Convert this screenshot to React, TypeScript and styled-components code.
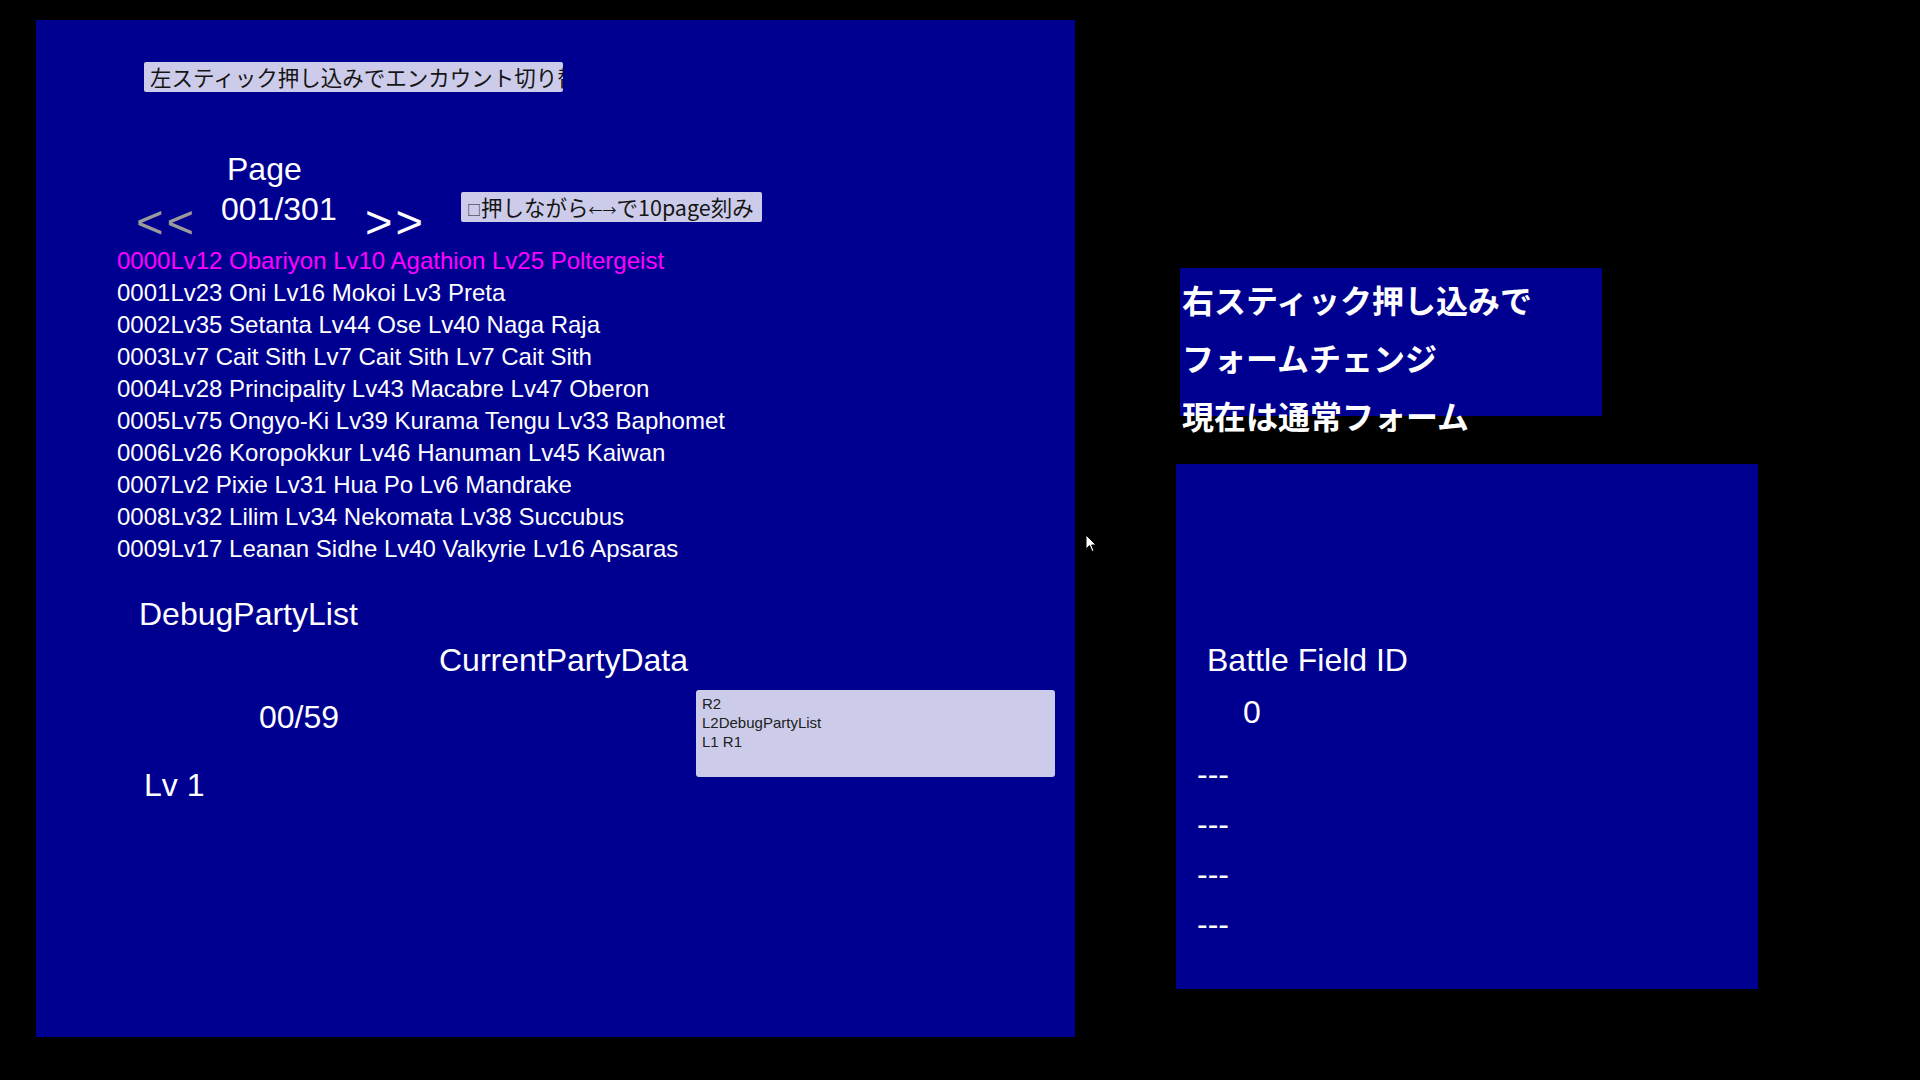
import React from 'react';
import styled, { createGlobalStyle } from 'styled-components';

const GlobalStyle = createGlobalStyle`
  html, body {
    margin: 0;
    padding: 0;
    background: #000;
  }
  body {
    font-family: 'Liberation Sans', Arial, sans-serif;
  }
`;

const PANEL_BLUE = '#000090';
const LABEL_BG = '#ccccea';

const Screen = styled.div`
  position: relative;
  width: 1920px;
  height: 1080px;
  box-sizing: border-box;
  padding: 20px 0 0 36px;
  display: flex;
  align-items: flex-start;
  background: #000;
  overflow: hidden;
`;

const LeftPanel = styled.section`
  width: 1039px;
  height: 1017px;
  background: ${PANEL_BLUE};
  display: flex;
  flex-direction: column;
  align-items: flex-start;
  color: #fff;
`;

const JpLabel = styled.div<{ $w: number; $x: number; $y: number }>`
  width: ${({ $w }) => $w}px;
  height: 30px;
  margin: ${({ $y }) => $y}px 0 0 ${({ $x }) => $x}px;
  box-sizing: border-box;
  padding: 0 6px;
  background: ${LABEL_BG};
  border-radius: 2px;
  color: #151515;
  font-family: 'Noto Sans CJK JP', sans-serif;
  font-size: 21.5px;
  line-height: 30px;
  white-space: nowrap;
  overflow: hidden;
`;

const Symbol = styled.span`
  font-size: 14px;
  vertical-align: 1px;
`;

const NavRow = styled.div`
  margin-top: 57px;
  height: 96px;
  padding-left: 100px;
  display: grid;
  grid-template-columns: 85px 144px 96px auto;
  align-items: start;
`;

const Arrow = styled.div<{ $dim?: boolean }>`
  margin-top: 49px;
  font-size: 47px;
  line-height: 47px;
  letter-spacing: 3px;
  color: ${({ $dim }) => ($dim ? '#9a9a9a' : '#fff')};
`;

const PageBlock = styled.div`
  display: flex;
  flex-direction: column;
`;

const BigText = styled.div<{ $x?: number; $y?: number }>`
  margin: ${({ $y = 0 }) => $y}px 0 0 ${({ $x = 0 }) => $x}px;
  font-size: 32px;
  line-height: 40px;
  color: #fff;
  white-space: nowrap;
`;

const HintSlot = styled.div`
  margin-top: 43px;
`;

const DemonList = styled.ul`
  margin: 0 0 0 81px;
  padding: 0;
  list-style: none;
`;

const DemonRow = styled.li<{ $active?: boolean }>`
  font-size: 24px;
  line-height: 32px;
  height: 32px;
  white-space: nowrap;
  color: ${({ $active }) => ($active ? '#ff00ff' : '#fff')};
`;

const PartyRow = styled.div`
  margin-top: 10px;
  display: flex;
  align-items: flex-start;
`;

const PartyStats = styled.div`
  width: 660px;
  display: flex;
  flex-direction: column;
  align-items: flex-start;
`;

const ButtonHelp = styled.div`
  width: 359px;
  height: 87px;
  box-sizing: border-box;
  padding: 4px 6px;
  background: ${LABEL_BG};
  border-radius: 3px;
  color: #202020;
  font-size: 15px;
  line-height: 19px;
`;

const RightColumn = styled.div`
  margin-left: 101px;
  display: flex;
  flex-direction: column;
  align-items: flex-start;
`;

const FormBox = styled.div`
  width: 422px;
  height: 148px;
  margin: 248px 0 0 4px;
  box-sizing: border-box;
  padding: 2px 0 0 2px;
  background: ${PANEL_BLUE};
  color: #fff;
  font-family: 'Noto Sans CJK JP', sans-serif;
  font-weight: 700;
  font-size: 32px;
  line-height: 58px;
  white-space: nowrap;
`;

const FieldBox = styled.div`
  width: 582px;
  height: 525px;
  margin-top: 48px;
  background: ${PANEL_BLUE};
  display: flex;
  flex-direction: column;
  align-items: flex-start;
`;

const DashList = styled.div`
  margin: 17px 0 0 21px;
`;

const Dash = styled.div`
  font-size: 32px;
  line-height: 50px;
  height: 50px;
  color: #fff;
`;

const Cursor = styled.svg`
  position: absolute;
  left: 1085px;
  top: 534px;
`;

const demons = [
  '0000Lv12 Obariyon Lv10 Agathion Lv25 Poltergeist',
  '0001Lv23 Oni Lv16 Mokoi Lv3 Preta',
  '0002Lv35 Setanta Lv44 Ose Lv40 Naga Raja',
  '0003Lv7 Cait Sith Lv7 Cait Sith Lv7 Cait Sith',
  '0004Lv28 Principality Lv43 Macabre Lv47 Oberon',
  '0005Lv75 Ongyo-Ki Lv39 Kurama Tengu Lv33 Baphomet',
  '0006Lv26 Koropokkur Lv46 Hanuman Lv45 Kaiwan',
  '0007Lv2 Pixie Lv31 Hua Po Lv6 Mandrake',
  '0008Lv32 Lilim Lv34 Nekomata Lv38 Succubus',
  '0009Lv17 Leanan Sidhe Lv40 Valkyrie Lv16 Apsaras',
];

export default function App() {
  return (
    <Screen>
      <GlobalStyle />
      <LeftPanel>
        <JpLabel $w={419} $x={108} $y={42}>
          左スティック押し込みでエンカウント切り替え
        </JpLabel>

        <NavRow>
          <Arrow $dim>&lt;&lt;</Arrow>
          <PageBlock>
            <BigText $x={6}>Page</BigText>
            <BigText>001/301</BigText>
          </PageBlock>
          <Arrow>&gt;&gt;</Arrow>
          <HintSlot>
            <JpLabel $w={301} $x={0} $y={0}>
              <Symbol>□</Symbol>押しながら<Symbol>←→</Symbol>で10page刻み
            </JpLabel>
          </HintSlot>
        </NavRow>

        <DemonList>
          {demons.map((row, i) => (
            <DemonRow key={row} $active={i === 0}>
              {row}
            </DemonRow>
          ))}
        </DemonList>

        <BigText $x={103} $y={29}>DebugPartyList</BigText>
        <BigText $x={403} $y={6}>CurrentPartyData</BigText>
        <PartyRow>
          <PartyStats>
            <BigText $x={223} $y={7}>00/59</BigText>
            <BigText $x={108} $y={28}>Lv 1</BigText>
          </PartyStats>
          <ButtonHelp>
            R2
            <br />
            L2DebugPartyList
            <br />
            L1 R1
          </ButtonHelp>
        </PartyRow>
      </LeftPanel>

      <RightColumn>
        <FormBox>
          右スティック押し込みで
          <br />
          フォームチェンジ
          <br />
          現在は通常フォーム
        </FormBox>
        <FieldBox>
          <BigText $x={31} $y={176}>Battle Field ID</BigText>
          <BigText $x={67} $y={12}>0</BigText>
          <DashList>
            <Dash>---</Dash>
            <Dash>---</Dash>
            <Dash>---</Dash>
            <Dash>---</Dash>
          </DashList>
        </FieldBox>
      </RightColumn>

      <Cursor width="12" height="19" viewBox="0 0 12 19">
        <path
          d="M1 1 L1 15 L4.5 11.5 L7 17.5 L9 16.6 L6.6 11 L11 11 Z"
          fill="#fff"
          stroke="#000"
          strokeWidth="1"
          strokeLinejoin="round"
        />
      </Cursor>
    </Screen>
  );
}
